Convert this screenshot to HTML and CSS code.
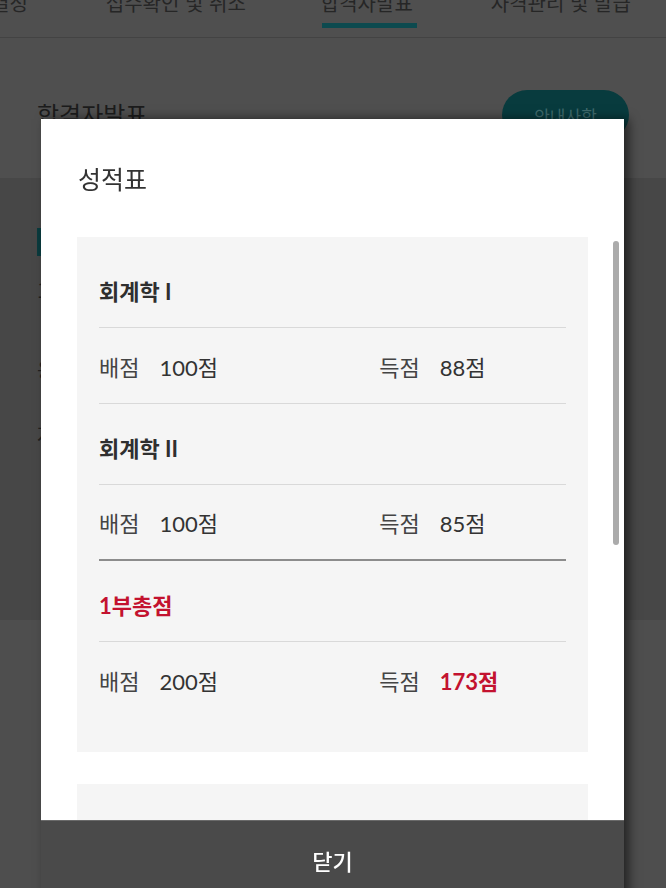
FILE: index.html
```html
<!DOCTYPE html>
<html lang="ko">
<head>
<meta charset="utf-8">
<title>성적표</title>
<link rel="stylesheet" href="styles.css">
</head>
<body>
<div class="page">
  <nav class="tabs">
    <span class="tab tab-a">결정</span>
    <span class="tab">접수확인 및 취소</span>
    <span class="tab active">합격자발표</span>
    <span class="tab">자격관리 및 발급</span>
  </nav>
  <header class="head">
    <h1 class="head-title">합격자발표</h1>
    <span class="notice-btn">안내사항</span>
  </header>
  <section class="mid">
    <div class="mid-bar"></div>
    <p class="mid-line l1">1차 시험 결과</p>
    <p class="mid-line l2">응시번호</p>
    <p class="mid-line l3">자격구분</p>
  </section>
  <section class="low">
    <p class="mid-line l4">⋮ 성적 안내</p>
  </section>
</div>

<div class="modal">
  <div class="modal-head">성적표</div>
  <div class="modal-body">
    <div class="card">
      <div class="row title">회계학 I</div>
      <div class="row vals">
        <div class="col left"><span class="lbl">배점</span><span class="num">100점</span></div>
        <div class="col"><span class="lbl">득점</span><span class="num">88점</span></div>
      </div>
      <div class="row title">회계학 II</div>
      <div class="row vals thick">
        <div class="col left"><span class="lbl">배점</span><span class="num">100점</span></div>
        <div class="col"><span class="lbl">득점</span><span class="num">85점</span></div>
      </div>
      <div class="row title total">1부총점</div>
      <div class="row vals last">
        <div class="col left"><span class="lbl">배점</span><span class="num">200점</span></div>
        <div class="col"><span class="lbl">득점</span><span class="num total">173점</span></div>
      </div>
    </div>
    <div class="card next"></div>
    <div class="thumb"></div>
  </div>
  <div class="modal-foot">닫기</div>
</div>
</body>
</html>
```

FILE: styles.css
```css
* { box-sizing: border-box; margin: 0; padding: 0; }
html, body {
  width: 666px;
  height: 888px;
  overflow: hidden;
}
body {
  background: #4e4e4e;
  font-family: Lato, "Noto Sans CJK KR", sans-serif;
}
.page {
  display: flex;
  flex-direction: column;
  height: 888px;
}
.tabs {
  height: 38px;
  border-bottom: 1px solid #434343;
  background: #4f4f4f;
  display: flex;
  gap: 75px;
  font-size: 20px;
  color: #262626;
  overflow: hidden;
}
.tab {
  position: relative;
  display: block;
  flex: none;
  line-height: 20px;
  margin-top: -7px;
  white-space: nowrap;
  height: 37px;
  font-family: "Noto Sans CJK KR", sans-serif;
}
.tab-a { margin-left: -9px; margin-right: 3px; }
.tab.active { margin-right: 3px; }
.tab.active::after {
  content: "";
  position: absolute;
  left: 1px;
  right: -4px;
  bottom: 2px;
  height: 5px;
  background: #0d4a4f;
}
.head {
  height: 140px;
  background: #4f4f4f;
  display: flex;
  justify-content: space-between;
  align-items: flex-start;
  padding: 52px 37px 0 37px;
}
.head-title {
  font-family: "Noto Sans CJK KR", sans-serif;
  font-weight: 400;
  font-size: 24px;
  line-height: 34px;
  margin-top: 7px;
  color: #1c1c1c;
}
.notice-btn {
  width: 127px;
  height: 50px;
  border-radius: 25px;
  background: #083b3e;
  color: #3f6a6c;
  font-family: "Noto Sans CJK KR", sans-serif;
  font-size: 17px;
  display: flex;
  align-items: center;
  justify-content: center;
}
.mid {
  height: 442px;
  background: #474747;
  padding: 50px 0 0 37px;
}
.mid-bar {
  width: 40px;
  height: 28px;
  background: #0a3b3e;
}
.mid-line {
  font-family: "Noto Sans CJK KR", sans-serif;
  font-size: 20px;
  color: #202020;
  line-height: 28px;
}
.l1 { margin-top: 20px; }
.l2 { margin-top: 52px; }
.l3 { margin-top: 37px; }
.low {
  flex: 1;
  background: #4e4e4e;
  padding: 56px 0 0 37px;
}

/* modal */
.modal {
  position: fixed;
  left: 41px;
  top: 119px;
  width: 583px;
  height: 779px;
  background: #ffffff;
  display: flex;
  flex-direction: column;
  box-shadow: 5px 0 10px rgba(0, 0, 0, 0.55);
}
.modal-head {
  height: 118px;
  flex: none;
  display: flex;
  align-items: center;
  padding-left: 37px;
  font-family: "Noto Sans CJK KR", sans-serif;
  font-size: 25px;
  font-weight: 400;
  color: #333333;
}
.modal-body {
  flex: 1;
  position: relative;
  overflow: hidden;
  padding: 0 36px;
}
.card {
  background: #f5f5f5;
  padding: 10px 22px 34px 22px;
}
.card.next {
  margin-top: 32px;
  height: 200px;
}
.row {
  display: flex;
  align-items: center;
  border-bottom: 1px solid #d9d9d9;
  color: #333333;
  font-size: 22px;
}
.row.title {
  height: 81px;
  padding-top: 6px;
  font-weight: 700;
  color: #2f2f2f;
}
.row.title.total {
  color: #c3122f;
}
.row.vals {
  height: 76px;
  padding-top: 0;
}
.row.thick {
  border-bottom: 2px solid #8c8c8c;
}
.row.last {
  border-bottom: none;
}
.col {
  display: flex;
  align-items: center;
}
.col.left {
  width: 60%;
}
.lbl {
  color: #444444;
  margin-right: 20px;
}
.num {
  color: #333333;
}
.num.total {
  color: #c3122f;
  font-weight: 700;
}
.thumb {
  position: absolute;
  right: 5px;
  top: 4px;
  width: 6px;
  height: 304px;
  border-radius: 3px;
  background: #ababab;
}
.modal-foot {
  height: 78px;
  flex: none;
  background: #4a4a4a;
  border-top: 1px solid #6a6a6a;
  color: #ffffff;
  font-family: "Noto Sans CJK KR", sans-serif;
  font-size: 22px;
  font-weight: 500;
  display: flex;
  align-items: center;
  justify-content: center;
}
```
